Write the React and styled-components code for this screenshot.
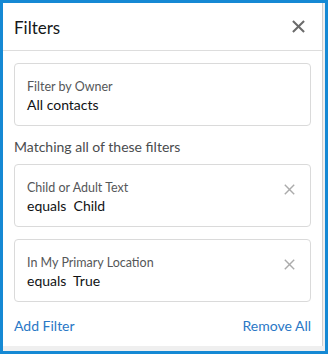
import React from 'react';
import styled, { createGlobalStyle } from 'styled-components';

const Global = createGlobalStyle`
  html, body {
    margin: 0;
    padding: 0;
    background: #ffffff;
  }
  * { box-sizing: border-box; }
`;

const Frame = styled.div`
  width: 328px;
  height: 354px;
  border: 3px solid #1589d4;
  background: #efefef;
  font-family: "Segoe UI", Lato, "Liberation Sans", sans-serif;
  overflow: hidden;
`;

const Panel = styled.div`
  width: 320px;
  height: 343px;
  background: #ffffff;
  border-right: 1px solid #cfcfcf;
  display: flex;
  flex-direction: column;
`;

const Header = styled.div`
  height: 48px;
  display: flex;
  align-items: center;
  justify-content: space-between;
  padding: 0 17px 0 11px;
  border-bottom: 1px solid #dddddd;
`;

const Title = styled.h2`
  margin: 0;
  font-size: 17px;
  font-weight: 400;
  color: #16181a;
  padding-top: 1px;
`;

const CloseButton = styled.button`
  border: 0;
  background: none;
  padding: 0;
  width: 13px;
  height: 13px;
  display: flex;
  cursor: pointer;
`;

const Body = styled.div`
  padding: 12px 11px 0;
  display: flex;
  flex-direction: column;
`;

const Card = styled.div`
  height: 63px;
  border: 1px solid #dadada;
  border-radius: 4px;
  padding: 15px 15px 0 12px;
  display: flex;
  justify-content: space-between;
  margin-bottom: ${p => p.gap || 0}px;
`;

const Label = styled.div`
  font-size: 12.5px;
  color: #555759;
  line-height: 16px;
`;

const Value = styled.div`
  font-size: 14px;
  color: #101214;
  line-height: 20px;
  white-space: pre;
`;

const Section = styled.div`
  font-size: 14px;
  color: #4a4c4e;
  line-height: 20px;
  margin: 11px 0 7px;
`;

const Remove = styled.button`
  border: 0;
  background: none;
  padding: 0;
  margin-top: 4px;
  width: 11px;
  height: 11px;
  display: flex;
  cursor: pointer;
`;

const Footer = styled.div`
  display: flex;
  justify-content: space-between;
  padding: 14px 11px 0;
`;

const Link = styled.a`
  font-size: 14px;
  color: #2a78c6;
  line-height: 20px;
  text-decoration: none;
  cursor: pointer;
`;

const Cross = ({ size, color, width }) => (
  <svg width={size} height={size} viewBox="0 0 14 14">
    <path d="M1 1 L13 13 M13 1 L1 13" stroke={color} strokeWidth={width} fill="none" />
  </svg>
);

const filters = [
  { label: 'Child or Adult Text', value: 'equals  Child' },
  { label: 'In My Primary Location', value: 'equals  True' },
];

export default function App() {
  return (
    <>
      <Global />
      <Frame>
        <Panel>
          <Header>
            <Title>Filters</Title>
            <CloseButton aria-label="Close">
              <Cross size={13} color="#6b6b6b" width={2.2} />
            </CloseButton>
          </Header>
          <Body>
            <Card>
              <div>
                <Label>Filter by Owner</Label>
                <Value>All contacts</Value>
              </div>
            </Card>
            <Section>Matching all of these filters</Section>
            {filters.map((f, i) => (
              <Card key={f.label} gap={i < filters.length - 1 ? 12 : 0}>
                <div>
                  <Label>{f.label}</Label>
                  <Value>{f.value}</Value>
                </div>
                <Remove aria-label="Remove filter">
                  <Cross size={11} color="#ababab" width={1.8} />
                </Remove>
              </Card>
            ))}
          </Body>
          <Footer>
            <Link>Add Filter</Link>
            <Link>Remove All</Link>
          </Footer>
        </Panel>
      </Frame>
    </>
  );
}
